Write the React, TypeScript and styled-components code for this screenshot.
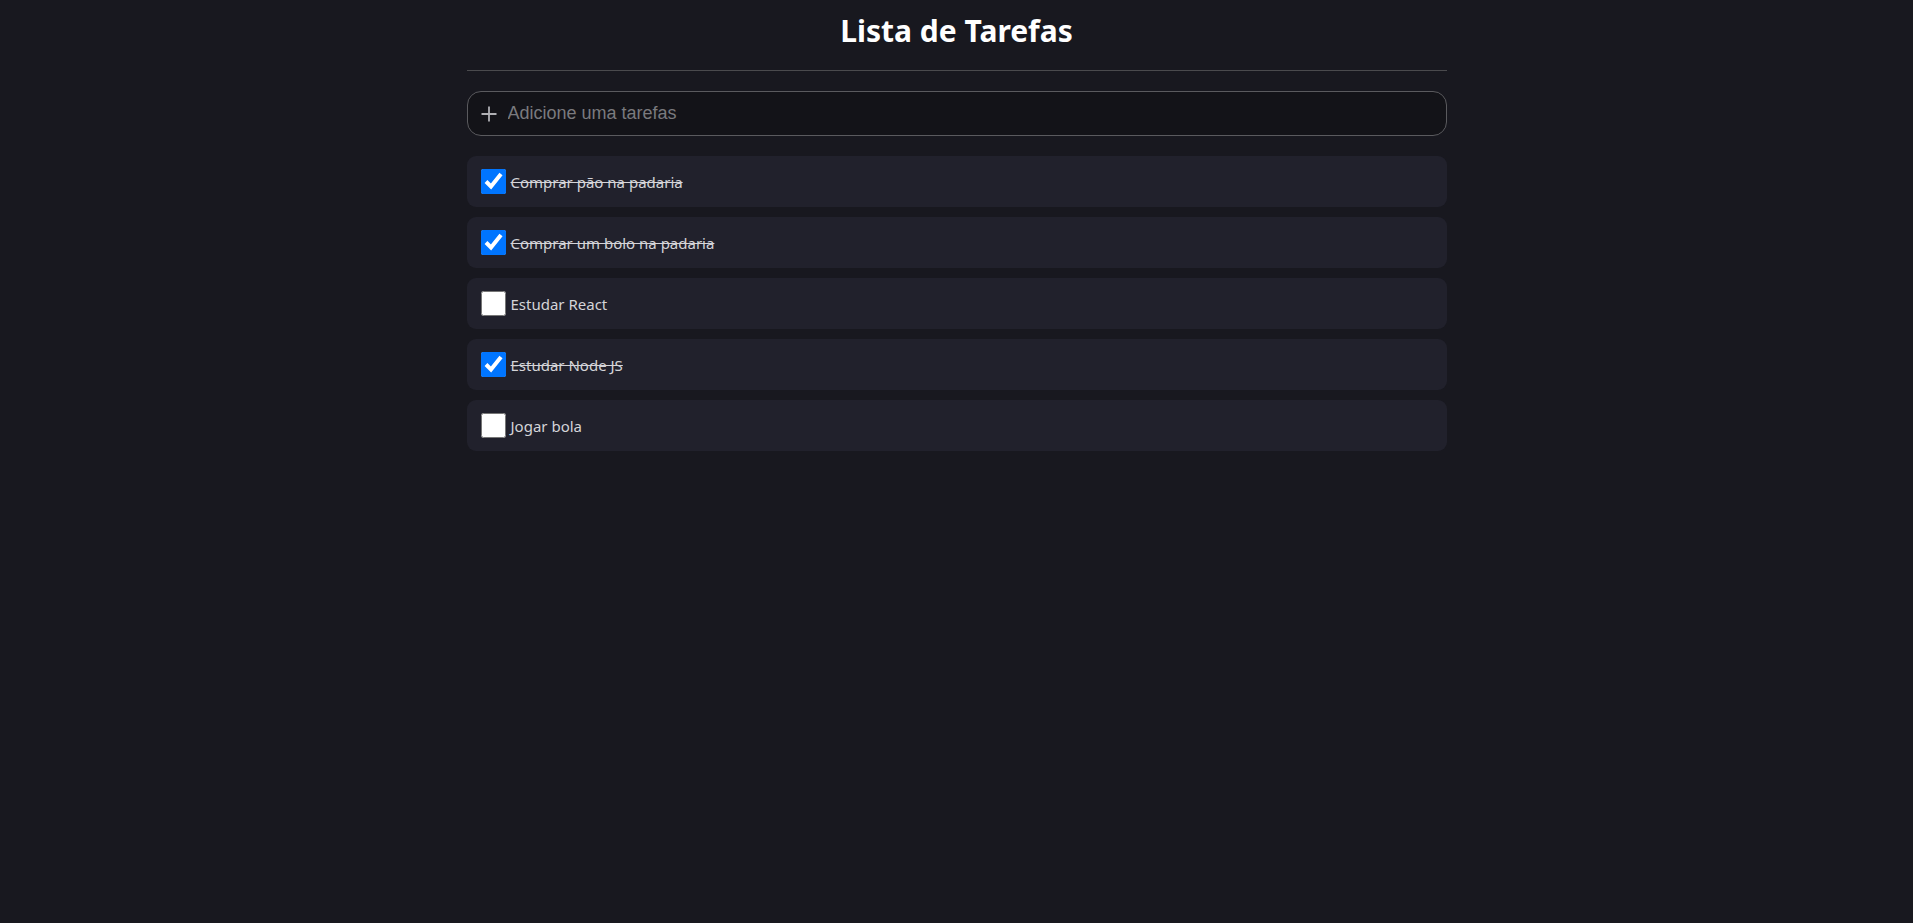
import React, { useState } from "react";
import styled, { createGlobalStyle } from "styled-components";

const GlobalStyle = createGlobalStyle`
    body {
        margin: 0;
        background: #18181f;
        font-family: "Noto Sans", "Open Sans", sans-serif;
    }
`;

const Page = styled.div`
    width: 980px;
    margin: 0 auto;
    display: flex;
    flex-direction: column;
`;

const Title = styled.h1`
    margin: 0;
    padding-top: 9px;
    height: 53px;
    line-height: 44px;
    text-align: center;
    color: #ffffff;
    font-size: 30px;
    font-weight: 700;
`;

const Divider = styled.hr`
    margin: 8px 0 20px;
    border: 0;
    border-top: 1px solid #4a4a4d;
`;

const InputBox = styled.label`
    display: flex;
    align-items: center;
    gap: 8px;
    height: 45px;
    box-sizing: border-box;
    padding: 0 12px;
    border: 1px solid #5a5a5e;
    border-radius: 14px;
    background: #131318;
`;

const PlusIcon = styled.svg`
    width: 18px;
    height: 18px;
    flex: 0 0 auto;
`;

const TextInput = styled.input`
    flex: 1;
    border: 0;
    outline: none;
    background: transparent;
    color: #e0e0e0;
    font-family: "Liberation Sans", Arial, sans-serif;
    font-size: 18px;

    &::placeholder {
        color: #7a7a7e;
    }
`;

const List = styled.ul`
    list-style: none;
    margin: 20px 0 0;
    padding: 0;
    display: flex;
    flex-direction: column;
    gap: 10px;
`;

const Item = styled.li`
    display: flex;
    align-items: center;
    gap: 5px;
    height: 51px;
    padding: 0 14px;
    border-radius: 9px;
    background: #21212c;
`;

const Check = styled.input`
    width: 25px;
    height: 25px;
    margin: 0;
    accent-color: #0075ff;
`;

const Label = styled.span<{ $done: boolean }>`
    color: #d4d4d8;
    font-size: 15px;
    text-decoration: ${(p) => (p.$done ? "line-through" : "none")};
`;

const initialTasks = [
    { id: 1, text: "Comprar pão na padaria", done: true },
    { id: 2, text: "Comprar um bolo na padaria", done: true },
    { id: 3, text: "Estudar React", done: false },
    { id: 4, text: "Estudar Node JS", done: true },
    { id: 5, text: "Jogar bola", done: false },
];

const App = () => {
    const [tasks, setTasks] = useState(initialTasks);

    const toggle = (id: number) =>
        setTasks(tasks.map((t) => (t.id === id ? { ...t, done: !t.done } : t)));

    return (
        <Page>
            <GlobalStyle />
            <Title>Lista de Tarefas</Title>
            <Divider />
            <InputBox>
                <PlusIcon viewBox="0 0 18 18">
                    <path d="M9 1.5v15M1.5 9h15" stroke="#b0b0b4" strokeWidth="1.8" fill="none" />
                </PlusIcon>
                <TextInput placeholder="Adicione uma tarefas" />
            </InputBox>
            <List>
                {tasks.map((t) => (
                    <Item key={t.id}>
                        <Check type="checkbox" checked={t.done} onChange={() => toggle(t.id)} />
                        <Label $done={t.done}>{t.text}</Label>
                    </Item>
                ))}
            </List>
        </Page>
    );
};

export default App;
